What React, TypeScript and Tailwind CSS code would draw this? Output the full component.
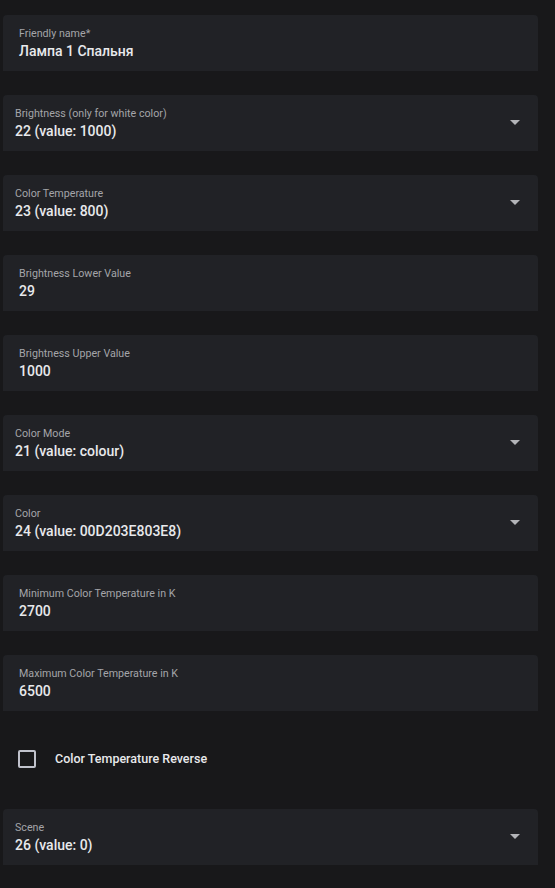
import React from "react";

type Field = {
  label: string;
  value: string;
  select?: boolean;
};

const fields: Field[] = [
  { label: "Friendly name*", value: "Лампа 1 Спальня" },
  { label: "Brightness (only for white color)", value: "22 (value: 1000)", select: true },
  { label: "Color Temperature", value: "23 (value: 800)", select: true },
  { label: "Brightness Lower Value", value: "29" },
  { label: "Brightness Upper Value", value: "1000" },
  { label: "Color Mode", value: "21 (value: colour)", select: true },
  { label: "Color", value: "24 (value: 00D203E803E8)", select: true },
  { label: "Minimum Color Temperature in K", value: "2700" },
  { label: "Maximum Color Temperature in K", value: "6500" },
];

function FilledField({ label, value, select }: Field) {
  return (
    <div className="relative h-[56px] w-[535px] rounded-t-[4px] bg-[#212226]">
      <div className={`flex h-full flex-col justify-center pt-[2px] ${select ? "pl-[12px]" : "pl-[16px]"}`}>
        <span className="text-[10.7px] leading-[14px] text-[#a4a5a9]">{label}</span>
        <span className="text-[14px] leading-[20px] font-medium text-[#e8e9ec]">{value}</span>
      </div>
      {select && (
        <svg
          className="absolute right-[18px] top-[25px]"
          width="10"
          height="5"
          viewBox="0 0 10 5"
        >
          <path d="M0 0h10L5 5z" fill="#b3b4b8" />
        </svg>
      )}
    </div>
  );
}

export default function App() {
  return (
    <div
      className="min-h-[888px] w-full bg-[#18181a] pl-[3px] pt-[15px]"
      style={{ fontFamily: "Roboto, 'Noto Sans', sans-serif" }}
    >
      <div className="flex flex-col gap-[24px]">
        {fields.map((f) => (
          <FilledField key={f.label} {...f} />
        ))}
      </div>

      {/* checkbox row */}
      <div className="flex h-[98px] items-center pb-[2px] pl-[15px]">
        <div className="h-[18px] w-[18px] rounded-[2px] border-2 border-[#c0c2cc]" />
        <span className="ml-[19px] text-[12.5px] font-medium text-[#e8e9ec]">
          Color Temperature Reverse
        </span>
      </div>

      <FilledField label="Scene" value="26 (value: 0)" select />
    </div>
  );
}
